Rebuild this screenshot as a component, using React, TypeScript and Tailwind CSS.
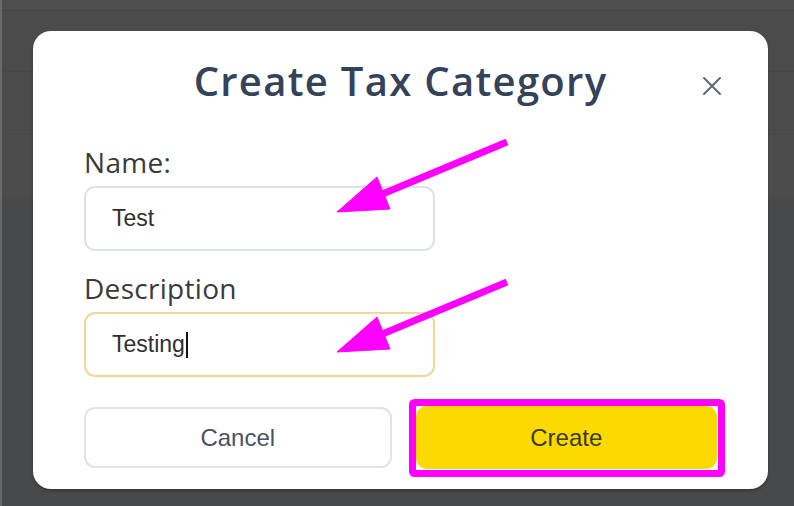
import type { ReactNode } from "react";

function Field({ label, children, focused }: { label: string; children: ReactNode; focused?: boolean }) {
  return (
    <div>
      <label className="block font-['Open_Sans',sans-serif] text-[28px] leading-[28px] tracking-[0.3px] text-[#3a3a3a]">{label}</label>
      <div
        className={
          "mt-[10px] flex h-[65px] items-center rounded-[11px] border-2 bg-white pl-[26px] font-['Liberation_Sans',Arial,sans-serif] text-[23px] text-[#2f2f2f] " +
          (focused ? "border-[#f3d59a]" : "border-[#dde1e8]")
        }
      >
        {children}
      </div>
    </div>
  );
}

function Annotations() {
  return (
    <svg className="pointer-events-none absolute inset-0" width="794" height="506" viewBox="0 0 794 506">
      {[0, 140].map((dy) => (
        <g key={dy} fill="#ff00ff" stroke="#ff00ff">
          <line x1="507" y1={142 + dy} x2="380" y2={195 + dy} strokeWidth="7" />
          <polygon points={`337,${212 + dy} 377,${177 + dy} 390,${209 + dy}`} strokeWidth="1" />
        </g>
      ))}
      <rect x="412.5" y="402.5" width="309" height="71" rx="2" fill="none" stroke="#ff00ff" strokeWidth="7" />
    </svg>
  );
}

export default function App() {
  return (
    <div className="relative h-[506px] w-[794px] overflow-hidden bg-[#48494b]">
      {/* dimmed page behind the dialog */}
      <div className="border-l-2 border-[#6a6a6a]">
        <div className="h-[11px] border-b border-[#444] bg-[#4e4e4e]" />
        <div className="h-[61px] border-b border-[#474747] bg-[#4b4b4b]" />
        <div className="h-[63px] border-b border-[#474747] bg-[#4b4b4b]" />
        <div className="h-[62px] bg-[#4c4c4c]" />
        <div className="h-[309px] bg-[#48494b]" />
      </div>

      <div className="absolute left-[33px] top-[31px] h-[458px] w-[735px] rounded-[18px] bg-white px-[51px] pt-[30px] shadow-[0_2px_3px_rgba(0,0,0,0.25)]">
        <div className="relative">
          <h2 className="text-center font-['Open_Sans',sans-serif] text-[40px] font-semibold leading-[40px] tracking-[1.3px] text-[#35435a]">
            Create Tax Category
          </h2>
          <button className="absolute right-[-5px] top-[15px] text-[#5e6779]" aria-label="Close">
            <svg width="20" height="20" viewBox="0 0 20 20" fill="none" stroke="currentColor" strokeWidth="2" strokeLinecap="round">
              <path d="M2 2L18 18M18 2L2 18" />
            </svg>
          </button>
        </div>

        <div className="mt-[47px] flex w-[351px] flex-col gap-[23px]">
          <Field label="Name:">Test</Field>
          <Field label="Description" focused>
            Testing
            <span className="ml-[1px] inline-block h-[26px] w-[2px] bg-[#111]" />
          </Field>
        </div>

        <div className="mt-[30px] flex items-start gap-[24px] font-['Liberation_Sans',Arial,sans-serif] text-[24px]">
          <button className="h-[61px] w-[308px] rounded-[11px] border-2 border-[#dfe3ea] bg-white text-[#4b5262]">Cancel</button>
          <button className="-mt-[1px] h-[63px] w-[302px] rounded-[11px] bg-[#fcd900] text-[#3b3a2c]">Create</button>
        </div>
      </div>

      <Annotations />
    </div>
  );
}
